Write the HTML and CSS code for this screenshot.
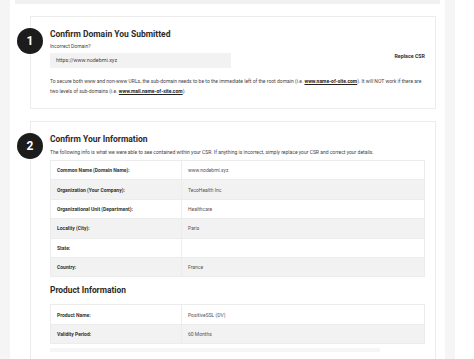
FILE: index.html
```html
<!DOCTYPE html>
<html lang="en">
<head>
    <meta charset="UTF-8">
    <meta name="viewport" content="width=device-width, initial-scale=1.0">
    <title>Confirm CSR</title>
    <link rel="stylesheet" href="styles.css">
</head>
<body>
    <div class="page">
        <div class="rail"></div>

        <main class="content">
            <div class="prev-box"></div>

            <section class="step-card">
                <div class="step-num">1</div>
                <h2>Confirm Domain You Submitted</h2>
                <div class="domain-row">
                    <div class="domain-field">
                        <label>Incorrect Domain?</label>
                        <div class="domain-input">https://www.nodebmi.xyz</div>
                    </div>
                    <a class="replace-link" href="#">Replace CSR</a>
                </div>
                <p class="note">To secure both www and non-www URLs, the sub-domain needs to be to the immediate left of the root domain (i.e. <b>www.name-of-site.com</b>). It will NOT work if there are two levels of sub-domains (i.e. <b>www.mail.name-of-site.com</b>).</p>
            </section>

            <section class="step-card">
                <div class="step-num">2</div>
                <h2>Confirm Your Information</h2>
                <p class="intro">The following info is what we were able to see contained within your CSR. If anything is incorrect, simply replace your CSR and correct your details.</p>

                <table class="info-table">
                    <tr><th>Common Name (Domain Name):</th><td>www.nodebmi.xyz</td></tr>
                    <tr><th>Organization (Your Company):</th><td>TecoHealth Inc</td></tr>
                    <tr><th>Organizational Unit (Department):</th><td>Healthcare</td></tr>
                    <tr><th>Locality (City):</th><td>Paris</td></tr>
                    <tr><th>State:</th><td></td></tr>
                    <tr><th>Country:</th><td>France</td></tr>
                </table>

                <h3>Product Information</h3>

                <table class="info-table">
                    <tr><th>Product Name:</th><td>PositiveSSL (DV)</td></tr>
                    <tr><th>Validity Period:</th><td>60 Months</td></tr>
                </table>
                <div class="fade"></div>
            </section>
        </main>

        <div class="rail"></div>
    </div>
</body>
</html>
```

FILE: styles.css
```css
body {
    margin: 0;
    background-color: #fff;
    font-family: Roboto, "Liberation Sans", Arial, sans-serif;
    color: #333;
}

.page {
    display: flex;
    height: 359px;
    overflow: hidden;
}

.rail {
    width: 10px;
    background-color: #f5f5f5;
    flex: none;
}

.content {
    width: 435px;
    flex: none;
}

.prev-box {
    height: 4px;
    margin: 0 5px 12px 5px;
    background-color: #f1f1f1;
}

.step-card {
    position: relative;
    margin: 0 9px 12px 20px;
    padding: 12px 12px 12px 19px;
    border: 1px solid #ececec;
}

.step-num {
    position: absolute;
    left: -14px;
    top: 11px;
    width: 26px;
    height: 26px;
    border-radius: 50%;
    background-color: #1c1c1c;
    color: #fff;
    font-size: 12px;
    font-weight: bold;
    line-height: 26px;
    text-align: center;
}

.step-card h2 {
    margin: 0;
    font-size: 8.5px;
    line-height: 11px;
    font-weight: bold;
    color: #2b2b2b;
}

.domain-row {
    display: flex;
    justify-content: space-between;
    align-items: flex-end;
}

.domain-field label {
    display: block;
    font-size: 5px;
    line-height: 8px;
    margin-top: 2px;
    color: #444;
}

.domain-input {
    width: 175px;
    height: 15px;
    margin-top: 3px;
    padding-left: 6px;
    background-color: #f2f2f2;
    font-size: 5.4px;
    line-height: 15px;
    color: #444;
}

.replace-link {
    font-size: 5.3px;
    font-weight: bold;
    color: #333;
    text-decoration: none;
    margin-bottom: 9px;
    margin-right: -2px;
}

.note {
    margin: 8px 0 0 0;
    font-size: 5px;
    line-height: 10px;
    color: #444;
}

.note b {
    color: #222;
    text-decoration: underline;
}

.intro {
    margin: 3px 0 0 0;
    font-size: 5px;
    line-height: 9px;
    color: #444;
}

.info-table {
    width: 375px;
    margin-top: 3px;
    border-collapse: collapse;
    font-size: 5px;
}

.info-table tr {
    height: 19.4px;
}

.info-table tr:nth-child(even) {
    background-color: #f2f2f2;
}

.info-table th,
.info-table td {
    border: 1px solid #ececec;
    padding: 0 6px;
    text-align: left;
}

.info-table th {
    width: 118px;
    font-weight: bold;
    color: #333;
}

.info-table td {
    color: #555;
}

.step-card h3 {
    margin: 8px 0 8px 0;
    font-size: 8.4px;
    line-height: 11px;
    font-weight: bold;
    color: #2b2b2b;
}

.fade {
    height: 4px;
    margin-top: 4px;
    width: 330px;
    background-color: #f6f6f6;
}
```
